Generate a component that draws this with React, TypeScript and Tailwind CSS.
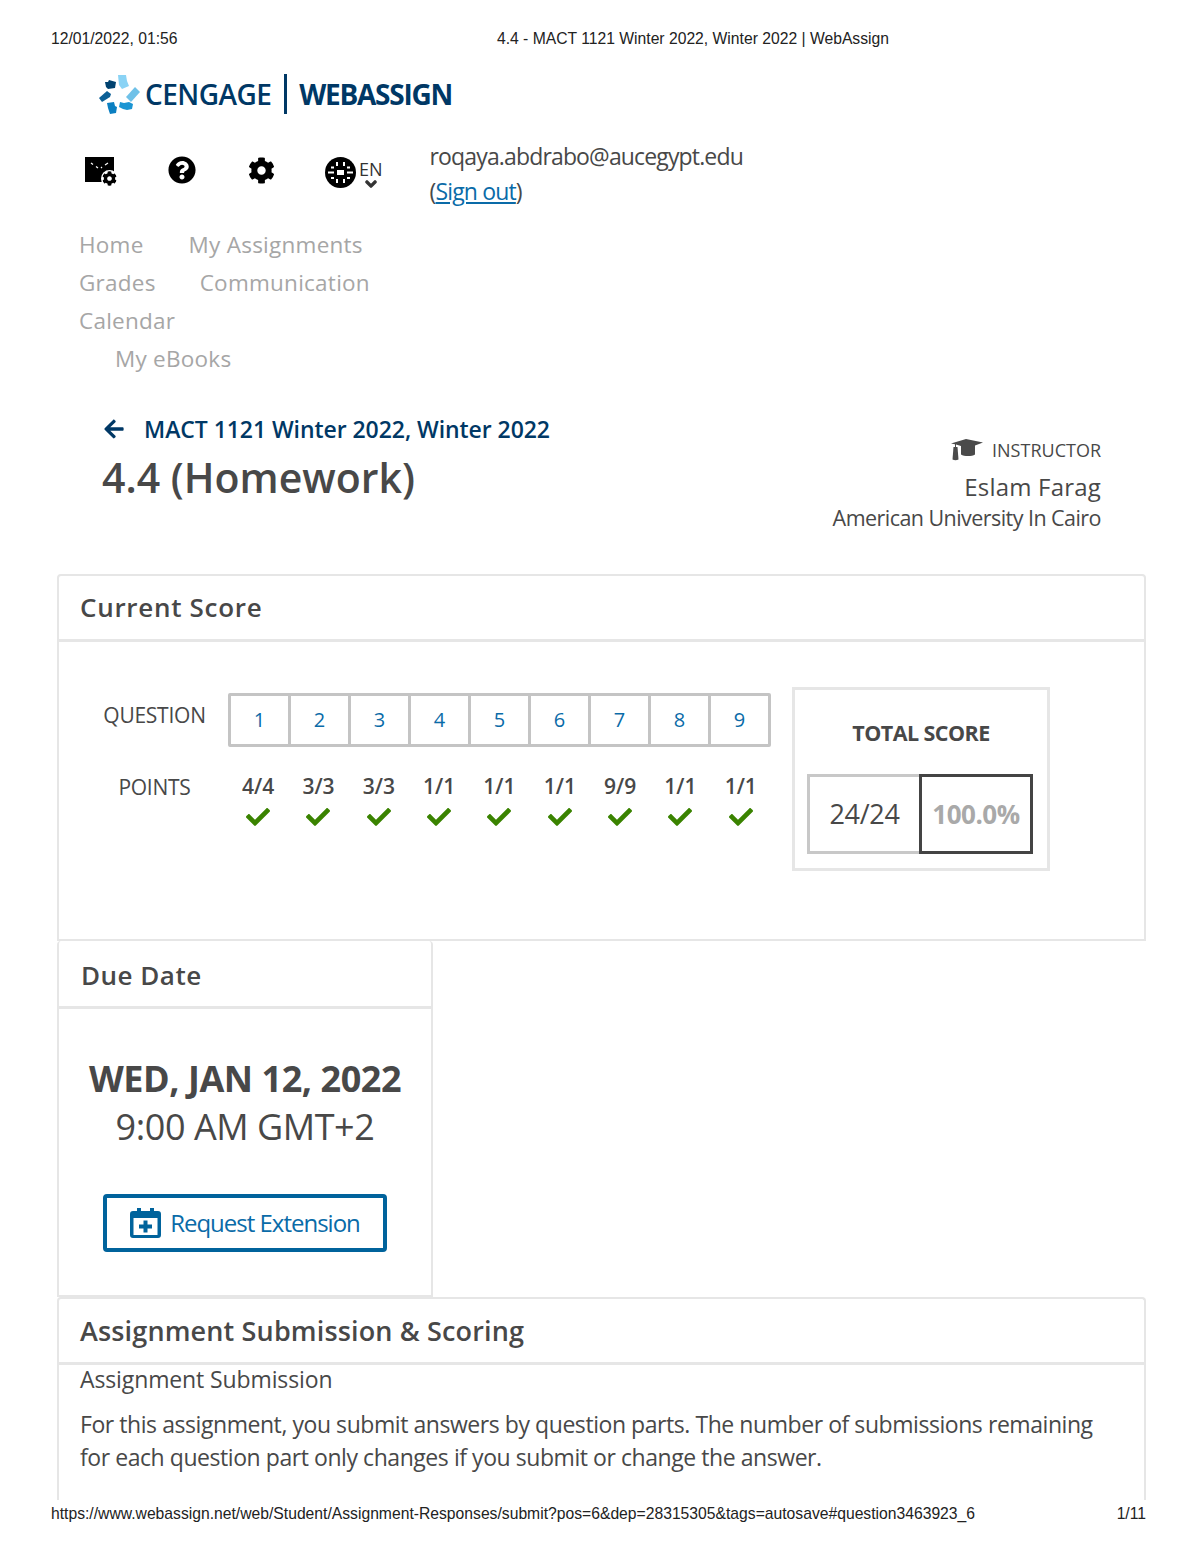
import React from "react";
import { FaArrowLeft, FaCheck, FaChevronDown, FaCog, FaQuestionCircle } from "react-icons/fa";

const cols = [
  ["1", "4/4"], ["2", "3/3"], ["3", "3/3"], ["4", "1/1"], ["5", "1/1"], ["6", "1/1"], ["7", "9/9"], ["8", "1/1"], ["9", "1/1"],
];

function Logo() {
  return (
    <svg width="44" height="42" viewBox="0 0 44 42" className="shrink-0">
      <path d="M20 2l8 0 1 6 2 5-7 3-3-4z" fill="#8ad3f5" />
      <path d="M28 24l9-10 5 5-9 10z" fill="#6fc1e8" />
      <path d="M22 29l4 1 5-1 4 2-1 5-5 1-4-1-4-2z" fill="#1b95d3" />
      <path d="M9 30l7-1 1 4 2 1-1 6-6 1-2-6z" fill="#0b7fc1" />
      <path d="M1 25l8-7 4 3-1 3-8 5z" fill="#0b5f96" />
      <path d="M7 9l3 0 1-2 7 2-1 6-7 1-2-2z" fill="#00426f" />
    </svg>
  );
}

function MailGear() {
  return (
    <div className="relative mt-[14px] w-[33px] h-[31px]">
      <svg width="29" height="25" viewBox="0 0 29 25" className="absolute left-0 top-[1px]">
        <rect width="29" height="25" fill="#000" />
        <path d="M6 6l2 1.5M11 9.5l2 1.5M23 6l-3 2M16 11l1-1" stroke="#fff" strokeWidth="1.2" />
      </svg>
      <FaCog size={17} className="absolute right-0 bottom-0 bg-white rounded-full p-[1px]" />
    </div>
  );
}

function Globe() {
  return (
    <svg width="31" height="31" viewBox="0 0 31 31" className="ml-[50px] mt-[15px] shrink-0">
      <circle cx="15.5" cy="15.5" r="15.5" fill="#000" />
      <g fill="#fff">
        <rect x="6" y="9.5" width="3" height="2" />
        <rect x="11" y="5" width="2" height="4" />
        <rect x="18" y="5" width="2" height="4" />
        <rect x="22" y="9.5" width="3" height="2" />
        <rect x="3" y="14.5" width="6" height="2" />
        <rect x="12" y="13" width="7" height="5" />
        <rect x="22" y="14.5" width="6" height="2" />
        <rect x="6" y="20" width="3" height="2" />
        <rect x="11" y="22" width="2" height="4" />
        <rect x="18" y="22" width="2" height="4" />
        <rect x="22" y="20" width="3" height="2" />
      </g>
    </svg>
  );
}

function Cap() {
  return (
    <svg width="32" height="22" viewBox="0 0 32 22" className="mr-[9px] shrink-0" fill="#4a4a4a">
      <path d="M0 4.5L15 0l17 3.5-8 3v9c-3 2-11 2-14 0V7L5 5.5V9H4V5.2z" />
      <path d="M2.5 8h4l1 12.5c-2 1-4 1-6 0z" />
    </svg>
  );
}

function CalendarPlus() {
  return (
    <svg width="31" height="30" viewBox="0 0 31 30" className="mr-[9px] shrink-0">
      <path d="M3 3h4V0h4v3h9V0h4v3h4a3 3 0 0 1 3 3v21a3 3 0 0 1-3 3H3a3 3 0 0 1-3-3V6a3 3 0 0 1 3-3z" fill="#00639c" />
      <rect x="3.5" y="10" width="24" height="17" fill="#fff" />
      <path d="M13.5 12.5h4v4h4.5v4h-4.5v4h-4v-4H9v-4h4.5z" fill="#00639c" />
    </svg>
  );
}

export default function App() {
  return (
    <div className="relative w-[1200px] h-[1553px] bg-white overflow-hidden font-['Open_Sans',sans-serif] text-[#484848]">
      <div className="flex justify-between px-[51px] pt-[30px] h-[49px] text-[15.7px] leading-[18px] text-[#222] font-['Liberation_Sans',sans-serif]">
        <span className="whitespace-nowrap">12/01/2022, 01:56</span>
        <span className="whitespace-nowrap mr-[260px]">4.4 - MACT 1121 Winter 2022, Winter 2022 | WebAssign</span>
      </div>

      <div className="ml-[98px] mt-[24px] flex items-center h-[42px]">
        <Logo />
        <span className="ml-[3px] text-[28px] font-semibold tracking-[-0.55px] text-[#003865] leading-none">CENGAGE</span>
        <span className="ml-[13px] w-[3px] h-[40px] bg-[#003865]" />
        <span className="ml-[12px] text-[28px] font-bold tracking-[-1.25px] text-[#003865] leading-none">WEBASSIGN</span>
      </div>

      <div className="ml-[85px] mt-[27px] flex items-start text-black">
        <MailGear />
        <FaQuestionCircle size={28} className="ml-[50px] mt-[14px]" />
        <FaCog size={27} className="ml-[52px] mt-[15px]" />
        <Globe />
        <div className="ml-[3px] mt-[16px] flex flex-col items-center text-[18px] leading-[22px] text-[#333]">
          EN
          <FaChevronDown size={12} strokeWidth={60} className="-mt-[2px]" />
        </div>
        <div className="ml-[47px] -mt-[3px] text-[23px] leading-[35px] tracking-[-0.85px] text-[#484848] whitespace-nowrap">
          <div>roqaya.abdrabo@aucegypt.edu</div>
          <div>(<span className="text-[#0a6ba8] underline">Sign out</span>)</div>
        </div>
      </div>

      <div className="ml-[79px] mt-[17px] text-[22.5px] leading-[38px] text-[#a6a6a6] tracking-[0.25px]">
        <div className="flex gap-[45px]"><span>Home</span><span>My Assignments</span></div>
        <div className="flex gap-[44px]"><span>Grades</span><span>Communication</span></div>
        <div>Calendar</div>
        <div className="ml-[36px]">My eBooks</div>
      </div>

      <div className="flex justify-between mt-[32px] pl-[102px] pr-[99px] h-[164px]">
        <div>
          <div className="flex items-center h-[32px] mt-[3px] text-[#003865] text-[23px] font-semibold tracking-[-0.06px] whitespace-nowrap">
            <FaArrowLeft size={22} className="ml-[1px] mr-[19px]" />
            MACT 1121 Winter 2022, Winter 2022
          </div>
          <div className="text-[41px] leading-[50px] font-semibold mt-[7px] whitespace-nowrap">4.4 (Homework)</div>
        </div>
        <div className="flex flex-col items-end pt-[26px] whitespace-nowrap">
          <div className="flex items-center h-[28px] text-[18px]">
            <Cap />
            INSTRUCTOR
          </div>
          <div className="text-[24px] leading-[32px] mt-[7px] font-medium tracking-[0.2px]">Eslam Farag</div>
          <div className="text-[21.5px] leading-[28px] mt-[1px] tracking-[-0.55px]">American University In Cairo</div>
        </div>
      </div>

      <div className="mx-[57px] w-[1089px]">
        <section className="h-[367px] border-2 border-[#e6e6e6] rounded-t-[4px]">
          <h2 className="h-[66px] flex items-center pl-[21px] border-b-[3px] border-[#e6e6e6] text-[26px] font-semibold tracking-[0.7px]">Current Score</h2>
          <div className="flex pt-[45px] pl-[45px]">
            <div className="w-[124px] text-[21px] tracking-[-0.25px] text-center shrink-0">
              <div className="h-[32px] leading-[32px] mt-[12px] -ml-[23px]">QUESTION</div>
              <div className="mt-[40px] leading-[32px] -ml-[23px]">POINTS</div>
            </div>
            <div className="w-[543px] shrink-0">
              <div className="flex h-[54px] mt-[6px] border-[3px] border-[#c4c4c4] rounded-[2px]">
                {cols.map(([q], i) => (
                  <div key={q} className={`flex-1 flex items-center justify-center text-[#0a6ba8] text-[20px] ${i ? "border-l-[3px] border-[#c4c4c4]" : ""}`}>{q}</div>
                ))}
              </div>
              <div className="flex mt-[23px]">
                {cols.map(([q, p]) => (
                  <div key={q} className="flex-1 flex flex-col items-center">
                    <span className="text-[21px] leading-[32px] font-semibold">{p}</span>
                    <FaCheck size={24} className="text-[#3a8300] mt-[3px]" />
                  </div>
                ))}
              </div>
            </div>
            <div className="ml-[21px] w-[258px] h-[184px] border-[3px] border-[#e6e6e6] flex flex-col items-center shrink-0">
              <div className="mt-[27px] h-[32px] leading-[32px] text-[21.5px] font-bold tracking-[-0.55px]">TOTAL SCORE</div>
              <div className="flex mt-[25px] h-[80px] -ml-[2px]">
                <div className="w-[112px] border-[3px] border-r-0 border-[#c8c8c8] flex items-center justify-center text-[27px] tracking-[-0.3px]">24/24</div>
                <div className="w-[114px] border-[3px] border-[#444] flex items-center justify-center text-[26px] font-bold text-[#a9a9a9] tracking-[-0.5px]">100.0%</div>
              </div>
            </div>
          </div>
        </section>

        <section className="w-[376px] h-[356px] border-2 border-t-0 border-[#e6e6e6] rounded-t-[4px]">
          <h2 className="h-[68px] flex items-center pl-[22px] pt-[3px] border-b-[3px] border-[#e6e6e6] text-[26px] font-semibold tracking-[0.5px]">Due Date</h2>
          <div className="flex flex-col items-center pt-[46px]">
            <div className="text-[36px] leading-[48px] font-bold tracking-[-0.45px] whitespace-nowrap">WED, JAN 12, 2022</div>
            <div className="text-[36px] leading-[48px] tracking-[-0.45px] whitespace-nowrap">9:00 AM GMT+2</div>
            <div className="mt-[43px] w-[284px] h-[58px] border-[4px] border-[#00639c] rounded-[4px] flex items-center justify-center text-[#0a6ba8] text-[24px] tracking-[-1px]">
              <CalendarPlus />
              Request Extension
            </div>
          </div>
        </section>

        <section className="h-[203px] border-2 border-b-0 border-[#e6e6e6] rounded-t-[4px]">
          <h2 className="h-[66px] flex items-center pl-[21px] pt-[2px] border-b-[3px] border-[#e6e6e6] text-[27px] font-semibold tracking-[0.15px]">Assignment Submission &amp; Scoring</h2>
          <div className="pl-[21px] pr-[30px]">
            <div className="text-[23px] leading-[30px] font-medium -mt-[1px] tracking-[-0.12px]">Assignment Submission</div>
            <p className="text-[23px] leading-[33px] mt-[14px] tracking-[-0.44px]">For this assignment, you submit answers by question parts. The number of submissions remaining for each question part only changes if you submit or change the answer.</p>
          </div>
        </section>
      </div>

      <div className="flex justify-between pl-[51px] pr-[54px] mt-[5px] text-[15.7px] leading-[18px] text-[#222] font-['Liberation_Sans',sans-serif]">
        <span className="whitespace-nowrap">https://www.webassign.net/web/Student/Assignment-Responses/submit?pos=6&amp;dep=28315305&amp;tags=autosave#question3463923_6</span>
        <span>1/11</span>
      </div>
    </div>
  );
}
